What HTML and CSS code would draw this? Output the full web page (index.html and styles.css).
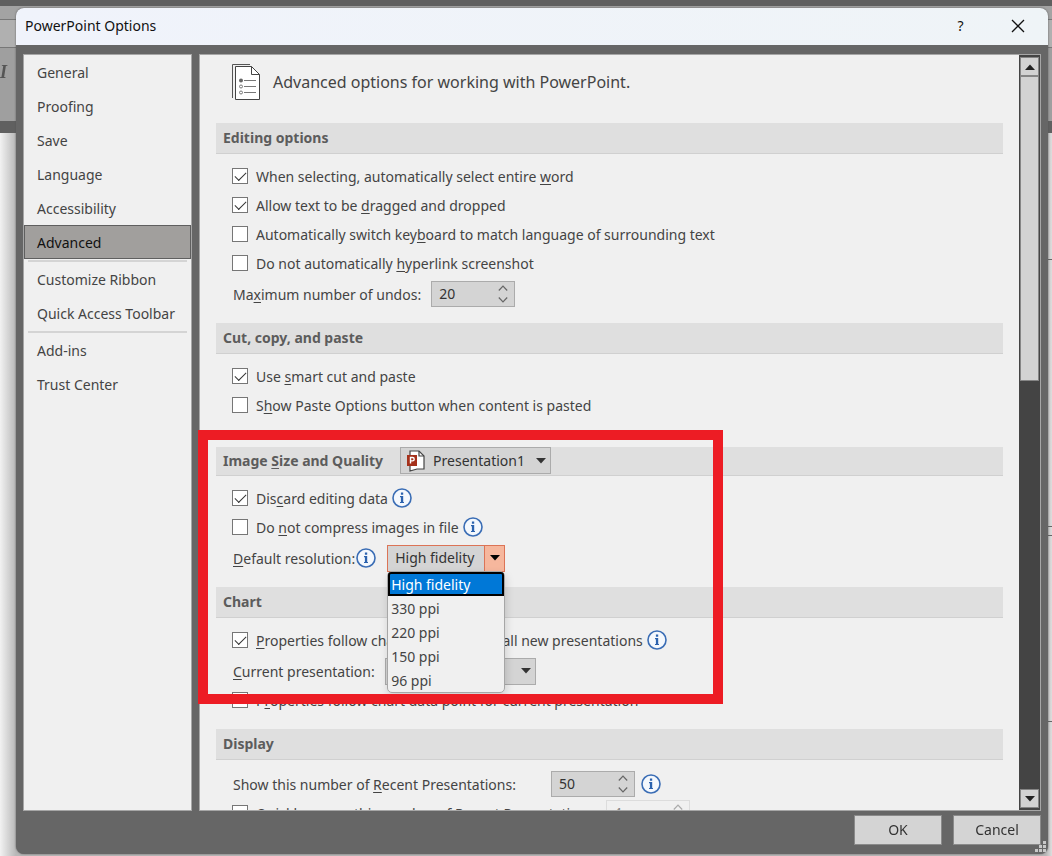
FILE: index.html
```html
<!DOCTYPE html>
<html lang="en">
<head>
    <meta charset="UTF-8">
    <meta name="viewport" content="width=device-width, initial-scale=1.0">
    <title>PowerPoint Options</title>
    <link rel="stylesheet" href="styles.css">
</head>
<body>

    <!-- application window behind the dialog -->
    <div class="backdrop" aria-hidden="true">
        <div class="app-title"></div>
        <div class="app-tabs"></div>
        <div class="app-search"></div>
        <div class="app-ribbon"><span class="italic-tool">I</span></div>
        <div class="app-line"></div>
        <div class="app-page">
            <div class="guide guide-first"></div>
            <div class="guide guide-second"></div>
            <div class="guide guide-third"></div>
            <div class="guide guide-fourth"></div>
        </div>
    </div>

    <!-- shared icons -->
    <svg class="sprite" aria-hidden="true">
        <symbol id="info" viewBox="0 0 20 20">
            <circle cx="10" cy="10" r="9" fill="#f4f8fd" stroke="#3a6db5" stroke-width="1.6"/>
            <path d="M8.900 4.600h2.300v2.200H8.900zM8 8.100h3.200v5.800H12v1.200H8v-1.200h.9V9.300H8z" fill="#2b62ae"/>
        </symbol>
        <symbol id="down" viewBox="0 0 10 6">
            <path d="M0 0h10L5 5.500z" fill="currentColor"/>
        </symbol>
        <symbol id="updown" viewBox="0 0 10 18">
            <path d="M.8 5.500L5 1.200l4.200 4.300M.8 12.500L5 16.800l4.200-4.300" fill="none" stroke="#666" stroke-width="1.2"/>
        </symbol>
    </svg>

    <div class="dialog" role="dialog" aria-labelledby="dialogTitle">
        <header class="titlebar">
            <h1 id="dialogTitle">PowerPoint Options</h1>
            <button class="title-button" type="button" aria-label="Help">?</button>
            <button class="title-button" type="button" aria-label="Close">
                <svg width="14" height="14" viewBox="0 0 14 14"><path d="M1 1l12 12M13 1L1 13" stroke="#111" stroke-width="1.3"/></svg>
            </button>
        </header>

        <div class="dialog-body">
            <nav class="sidebar">
                <a href="#general">General</a>
                <a href="#proofing">Proofing</a>
                <a href="#save">Save</a>
                <a href="#language">Language</a>
                <a href="#accessibility">Accessibility</a>
                <a class="active" href="#advanced">Advanced</a>
                <hr>
                <a href="#ribbon">Customize Ribbon</a>
                <a href="#toolbar">Quick Access Toolbar</a>
                <hr>
                <a href="#addins">Add-ins</a>
                <a href="#trust">Trust Center</a>
            </nav>

            <div class="panel">
                <main class="content">
                    <div class="intro">
                        <svg width="28" height="36" viewBox="0 0 28 36">
                            <path d="M.5 34V.5H18" fill="none" stroke="#555"/>
                            <path d="M3.500 2.500h16l8 8v25h-24z" fill="#fff" stroke="#444"/>
                            <path d="M19.500 2.500v8h8" fill="none" stroke="#444"/>
                            <circle cx="9" cy="16.500" r="2" fill="#666"/>
                            <circle cx="9" cy="22.500" r="1.500" fill="none" stroke="#777"/>
                            <circle cx="9" cy="28.500" r="1.500" fill="none" stroke="#777"/>
                            <path d="M12 16.500h12M12 22.500h12M12 28.500h12" stroke="#777"/>
                        </svg>
                        <p>Advanced options for working with PowerPoint.</p>
                    </div>

                    <section>
                        <h2>Editing options</h2>
                        <div class="rows">
                            <div class="row"><input type="checkbox" id="entireWord" checked><label for="entireWord">When selecting, automatically select entire <u>w</u>ord</label></div>
                            <div class="row"><input type="checkbox" id="dragDrop" checked><label for="dragDrop">Allow text to be <u>d</u>ragged and dropped</label></div>
                            <div class="row"><input type="checkbox" id="keyboard"><label for="keyboard">Automatically switch key<u>b</u>oard to match language of surrounding text</label></div>
                            <div class="row"><input type="checkbox" id="hyperlink"><label for="hyperlink">Do not automatically <u>h</u>yperlink screenshot</label></div>
                            <div class="row field-row">
                                <label for="undos">Ma<u>x</u>imum number of undos:</label>
                                <span class="spinner"><input type="number" id="undos" value="20"><svg><use href="#updown"/></svg></span>
                            </div>
                        </div>
                    </section>

                    <section class="spaced">
                        <h2>Cut, copy, and paste</h2>
                        <div class="rows">
                            <div class="row"><input type="checkbox" id="smartCut" checked><label for="smartCut">Use <u>s</u>mart cut and paste</label></div>
                            <div class="row"><input type="checkbox" id="pasteButton"><label for="pasteButton">S<u>h</u>ow Paste Options button when content is pasted</label></div>
                        </div>
                    </section>

                    <section>
                        <div class="heading-bar">
                            <h2><label for="imageTarget">Image <u>S</u>ize and Quality</label></h2>
                            <span class="combo combo-file">
                                <svg class="file-icon" width="20" height="22" viewBox="0 0 20 22">
                                    <path d="M4 1h9l5 5v13h-7l-7 2z" fill="#fff" stroke="#444" stroke-width="1.2"/>
                                    <path d="M13 1v5h5" fill="none" stroke="#444" stroke-width="1.2"/>
                                    <path d="M1 5h10v11H1z" fill="#a5311b"/>
                                    <path d="M4.500 13.500V7.500h2a1.700 1.700 0 010 3.400h-2" fill="none" stroke="#fff" stroke-width="1.400"/>
                                </svg>
                                <select id="imageTarget"><option>Presentation1</option></select>
                                <svg class="arrow"><use href="#down"/></svg>
                            </span>
                        </div>
                        <div class="rows">
                            <div class="row"><input type="checkbox" id="discard" checked><label for="discard">Dis<u>c</u>ard editing data</label><svg class="info"><use href="#info"/></svg></div>
                            <div class="row"><input type="checkbox" id="compress"><label for="compress">Do <u>n</u>ot compress images in file</label><svg class="info"><use href="#info"/></svg></div>
                            <div class="row field-row resolution-row">
                                <label for="resolution"><u>D</u>efault resolution:</label><svg class="info"><use href="#info"/></svg>
                                <span class="combo combo-open">
                                    <select id="resolution"><option>High fidelity</option></select>
                                    <span class="arrow-box"><svg class="arrow"><use href="#down"/></svg></span>
                                    <ul class="menu" role="listbox" aria-label="Default resolution">
                                        <li class="selected" role="option" aria-selected="true">High fidelity</li>
                                        <li role="option">330 ppi</li>
                                        <li role="option">220 ppi</li>
                                        <li role="option">150 ppi</li>
                                        <li role="option">96 ppi</li>
                                    </ul>
                                </span>
                            </div>
                        </div>
                    </section>

                    <section>
                        <h2>Chart</h2>
                        <div class="rows">
                            <div class="row"><input type="checkbox" id="chartAll" checked><label for="chartAll"><u>P</u>roperties follow chart data point for all new presentations</label><svg class="info"><use href="#info"/></svg></div>
                            <div class="row field-row">
                                <label for="chartTarget"><u>C</u>urrent presentation:</label>
                                <span class="combo combo-file">
                                    <select id="chartTarget"><option>Presentation1</option></select>
                                    <svg class="arrow"><use href="#down"/></svg>
                                </span>
                            </div>
                            <div class="row"><input type="checkbox" id="chartCurrent"><label for="chartCurrent">P<u>r</u>operties follow chart data point for current presentation</label></div>
                        </div>
                    </section>

                    <section>
                        <h2>Display</h2>
                        <div class="rows">
                            <div class="row field-row recent-row">
                                <label for="recent">Show this number of <u>R</u>ecent Presentations:</label>
                                <span class="spinner"><input type="number" id="recent" value="50"><svg><use href="#updown"/></svg></span>
                                <svg class="info"><use href="#info"/></svg>
                            </div>
                            <div class="row">
                                <input type="checkbox" id="quick"><label for="quick">Quickly access this number of Recent Presentations:</label>
                                <span class="spinner disabled"><input type="number" value="4" aria-label="Quick access presentations" disabled><svg><use href="#updown"/></svg></span>
                            </div>
                        </div>
                    </section>
                </main>

                <div class="scrollbar">
                    <button type="button" aria-label="Scroll up"><svg class="arrow flip"><use href="#down"/></svg></button>
                    <div class="thumb"></div>
                    <div class="track"></div>
                    <button type="button" aria-label="Scroll down"><svg class="arrow"><use href="#down"/></svg></button>
                </div>
            </div>
        </div>

        <footer class="actions">
            <button type="button">OK</button>
            <button type="button">Cancel</button>
        </footer>

        <svg class="grip" width="11" height="11" viewBox="0 0 11 11"><path d="M8 0h3v3H8zM4 4h3v3H4zM8 4h3v3H8zM0 8h3v3H0zM4 8h3v3H4zM8 8h3v3H8z" fill="#c8c8c8"/></svg>
        <div class="highlight"></div>
    </div>

</body>
</html>
```
FILE: styles.css
```css
* {
    box-sizing: border-box;
}
body {
    margin: 0;
    height: 100vh;
    padding: 8px 4px 2px 16px;
    overflow: hidden;
    font-family: "Noto Sans", "Open Sans", sans-serif;
    font-size: 14px;
    line-height: 20px;
    color: #444;
}
h1, h2, p, ul {
    margin: 0;
    padding: 0;
    font-size: 14px;
}
button, input, select {
    font: inherit;
    color: inherit;
    margin: 0;
}
u {
    text-underline-offset: 2px;
}
.sprite {
    display: none;
}

/* window behind */
.backdrop {
    position: fixed;
    inset: 0;
    z-index: -1;
    display: flex;
    flex-direction: column;
}
.app-title {
    height: 6px;
    background: #5f5f5f;
}
.app-tabs {
    height: 14px;
    background: #a3a3a3;
    border-bottom: 1px solid #777;
}
.app-search {
    height: 28px;
    background: #b0b0b0;
    border-bottom: 1px solid #777;
}
.app-ribbon {
    height: 73px;
    padding-top: 14px;
    background: #9f9f9f;
}
.italic-tool {
    font: italic bold 18px "Liberation Serif", serif;
    color: #555;
}
.app-line {
    height: 12px;
    background: #606060;
}
.app-page {
    flex: 1;
    display: flex;
    flex-direction: column;
    align-items: flex-end;
    background: linear-gradient(to right, #f2f2f2, #b8b8b8 16px, #b8b8b8 1046px, #dedede);
}
.guide {
    width: 6px;
    border-top: 1px dashed #666;
}
.guide-first {
    margin-top: 126px;
}
.guide-second {
    margin-top: 266px;
}
.guide-third {
    margin-top: 8px;
}
.guide-fourth {
    margin-top: 185px;
}

/* dialog */
.dialog {
    position: relative;
    display: flex;
    flex-direction: column;
    height: 100%;
    background: #666;
    border-radius: 8px;
    box-shadow: 0 0 2px #555;
}
.titlebar {
    display: flex;
    align-items: center;
    height: 37px;
    padding: 0 2px 1px 9px;
    background: linear-gradient(to right, #f0f3fb, #eff4f7);
    border-radius: 8px 8px 0 0;
    color: #111;
}
.titlebar h1 {
    flex: 1;
    font-weight: normal;
}
.title-button {
    display: flex;
    align-items: center;
    justify-content: center;
    width: 57px;
    height: 36px;
    padding: 0;
    border: 0;
    background: none;
}
.dialog-body {
    flex: 1;
    min-height: 0;
    display: flex;
    gap: 7px;
    padding: 9px 7px 0;
}
.sidebar {
    width: 169px;
    background: #f0f0f0;
    border: 1px solid #a6a6a6;
}
.sidebar a {
    display: block;
    height: 34px;
    padding: 8px 13px;
    color: #444;
    text-decoration: none;
    white-space: nowrap;
}
.sidebar a.active {
    padding: 7px 12px;
    background: #a19f9d;
    border: 1px solid #5f5f5f;
    color: #111;
}
.sidebar hr {
    height: 2px;
    margin: 1px 4px 0;
    border: 0;
    background: #d4d4d4;
}
.panel {
    flex: 1;
    min-width: 0;
    display: flex;
    background: #f0f0f0;
    border: 1px solid #a6a6a6;
}
.content {
    flex: 1;
    min-width: 0;
    padding: 0 16px;
    overflow: hidden;
}
.intro {
    display: flex;
    align-items: center;
    gap: 13px;
    height: 68px;
    padding: 0 16px 14px;
}
.intro p {
    font-size: 16px;
}

/* sections */
section {
    margin-bottom: 15px;
}
section.spaced {
    margin-bottom: 28px;
}
section > h2, .heading-bar {
    height: 31px;
    padding: 5px 7px;
    background: #dfdfdf;
    border-bottom: 1px solid #d0d0d0;
    color: #5c5c5c;
}
.heading-bar {
    display: flex;
    align-items: center;
    gap: 17px;
    height: 29px;
    padding: 0 7px 1px;
}
.rows {
    padding: 7px 16px 0;
}
.row {
    display: flex;
    align-items: center;
    gap: 8px;
    height: 29px;
    white-space: nowrap;
}
.row label {
    padding-top: 2px;
}
.field-row {
    gap: 10px;
    height: 31px;
    padding: 3px 0 0 1px;
}
.resolution-row {
    gap: 11px;
}
.recent-row label {
    width: 308px;
}
input[type="checkbox"] {
    appearance: none;
    width: 16px;
    height: 16px;
    background: #fff;
    border: 1px solid #767676;
}
input[type="checkbox"]:checked::after {
    content: "";
    display: block;
    width: 10px;
    height: 5px;
    margin: 3px 0 0 2px;
    border: solid #333;
    border-width: 0 0 1px 1px;
    transform: rotate(-45deg);
}
.info {
    flex: none;
    width: 20px;
    height: 20px;
    margin-left: -4px;
}
.resolution-row .info {
    margin-left: -10px;
}

/* number boxes */
.spinner {
    display: flex;
    align-items: center;
    width: 84px;
    height: 26px;
    padding: 0 6px 0 7px;
    background: #d4d4d4;
    border: 1px solid #ababab;
    color: #333;
}
.spinner input {
    flex: 1;
    min-width: 0;
    padding: 0;
    border: 0;
    background: none;
    appearance: textfield;
}
.spinner input::-webkit-inner-spin-button {
    display: none;
}
.spinner svg {
    width: 10px;
    height: 18px;
}
.spinner.disabled {
    background: #f0f0f0;
    border-color: #dcdcdc;
    color: #888;
}
.spinner.disabled svg {
    opacity: 0.5;
}

/* drop-downs */
.combo {
    position: relative;
    display: flex;
    align-items: center;
    height: 27px;
    background: #d4d4d4;
    border: 1px solid #ababab;
    color: #333;
}
.combo select {
    flex: 1;
    height: 25px;
    padding: 0 7px;
    appearance: none;
    border: 0;
    background: none;
}
.combo-file {
    width: 151px;
    padding: 0 4px 0 5px;
}
.arrow {
    width: 10px;
    height: 6px;
}
.combo-open {
    width: 118px;
    border-color: #dc7456;
}
.arrow-box {
    display: flex;
    align-items: center;
    justify-content: center;
    width: 20px;
    height: 25px;
    background: #f6b79d;
    border-left: 1px solid #dc7456;
    color: #000;
}
.menu {
    position: absolute;
    top: 25px;
    left: -1px;
    z-index: 1;
    width: 118px;
    background: #f0f0f0;
    border: 1px solid #a6a6a6;
    border-radius: 5px;
    box-shadow: 1px 4px 8px rgba(0, 0, 0, 0.15);
    list-style: none;
}
.menu li {
    height: 24px;
    padding: 3px 3px 1px;
    color: #444;
}
.menu .selected {
    padding: 1px 1px 0;
    background: #0078d7;
    border: 2px solid #000;
    border-radius: 3px 3px 0 0;
    color: #fff;
}

/* scrollbar */
.scrollbar {
    display: flex;
    flex-direction: column;
    width: 21px;
    padding: 2px 1px;
    background: #444;
}
.scrollbar button {
    display: flex;
    align-items: center;
    justify-content: center;
    height: 19px;
    padding: 0;
    background: #d2d2d2;
    border: 1px solid #858585;
    color: #222;
}
.thumb {
    flex: 304;
    background: #d2d2d2;
    border: 1px solid #858585;
}
.track {
    flex: 409;
}
.flip {
    transform: rotate(180deg);
}

/* footer */
.actions {
    display: flex;
    justify-content: flex-end;
    gap: 11px;
    padding: 4px 7px 9px;
}
.actions button {
    width: 88px;
    height: 30px;
    padding: 0;
    background: #d4d4d4;
    border: 1px solid #8a8a8a;
    color: #333;
}
.grip {
    position: absolute;
    right: 2px;
    bottom: 2px;
}

/* red frame round the image settings */
.highlight {
    position: absolute;
    z-index: 2;
    top: 422px;
    left: 182px;
    width: 525px;
    height: 274px;
    border: 10px solid #ed1c24;
    pointer-events: none;
}
```
